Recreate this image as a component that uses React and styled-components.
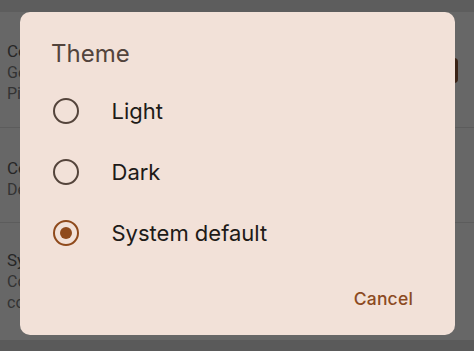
import React from "react";
import styled, { createGlobalStyle } from "styled-components";

const Global = createGlobalStyle`
  html, body { margin: 0; padding: 0; }
  body { font-family: Roboto, "Noto Sans", sans-serif; }
  #root { width: 474px; height: 351px; overflow: hidden; }
`;

const Screen = styled.div`
  position: relative;
  width: 474px;
  height: 351px;
  background: #676767;
  display: flex;
  flex-direction: column;
  overflow: hidden;
`;

const TopBand = styled.div`
  height: 12px;
  background: #5d5d5d;
  flex: none;
`;

const Item = styled.div`
  position: relative;
  height: ${(p) => p.$h}px;
  box-sizing: border-box;
  padding: ${(p) => p.$pt}px 0 0 7px;
  border-bottom: ${(p) => (p.$last ? "none" : "1px solid #5c5c5c")};
  display: flex;
  flex-direction: column;
  gap: 4px;
  flex: none;
`;

const ItemTitle = styled.div`
  font-size: 17px;
  line-height: 20px;
  color: #262626;
  white-space: nowrap;
`;

const ItemSub = styled.div`
  font-size: 16px;
  line-height: 19px;
  color: #333333;
  white-space: nowrap;
  margin-top: -2px;
`;

const BottomBand = styled.div`
  flex: 1;
  background: #5a5a5a;
`;

const SideChip = styled.div`
  position: absolute;
  right: 16px;
  top: 58px;
  width: 22px;
  height: 25px;
  border-radius: 4px;
  background: #3b2316;
`;

const Dialog = styled.div`
  position: absolute;
  left: 20px;
  top: 12px;
  width: 435px;
  height: 323px;
  border-radius: 10px;
  background: #f2e1d8;
  box-sizing: border-box;
  padding: 26px 42px 0 32px;
  display: flex;
  flex-direction: column;
  font-family: Inter, Roboto, sans-serif;
`;

const Title = styled.div`
  font-size: 24px;
  line-height: 32px;
  color: #52443c;
  margin-left: -1px;
  margin-bottom: 10px;
`;

const Options = styled.div`
  display: flex;
  flex-direction: column;
`;

const Option = styled.div`
  height: 61px;
  display: flex;
  align-items: center;
  gap: 34px;
`;

const Radio = styled.div`
  width: 26px;
  height: 26px;
  box-sizing: border-box;
  border-radius: 50%;
  border: 2.6px solid ${(p) => (p.$on ? "#8f4a1c" : "#54443b")};
  display: flex;
  align-items: center;
  justify-content: center;
  margin-left: 0.5px;
  flex: none;
`;

const Dot = styled.div`
  width: 12px;
  height: 12px;
  border-radius: 50%;
  background: #8f4a1c;
`;

const Label = styled.div`
  font-size: 22px;
  line-height: 28px;
  color: #201a17;
  margin-left: -1px;
`;

const Actions = styled.div`
  margin-top: auto;
  margin-bottom: 24px;
  display: flex;
  justify-content: flex-end;
`;

const TextButton = styled.div`
  font-size: 17.5px;
  font-weight: 500;
  line-height: 24px;
  color: #8c4a22;
  letter-spacing: 0.2px;
`;

const options = [
  { label: "Light", on: false },
  { label: "Dark", on: false },
  { label: "System default", on: true },
];

export default function App() {
  return (
    <>
      <Global />
      <Screen>
        <TopBand />
        <Item $h={116} $pt={29}>
          <ItemTitle>Color scheme</ItemTitle>
          <ItemSub>Get colors from wallpaper</ItemSub>
          <ItemSub>Pick a palette</ItemSub>
        </Item>
        <Item $h={95} $pt={30}>
          <ItemTitle>Contrast</ItemTitle>
          <ItemSub>Default</ItemSub>
        </Item>
        <Item $h={117} $pt={27} $last>
          <ItemTitle>Sync settings</ItemTitle>
          <ItemSub>Copy preferences across</ItemSub>
          <ItemSub>connected devices</ItemSub>
        </Item>
        <BottomBand />
        <SideChip />
        <Dialog>
          <Title>Theme</Title>
          <Options>
            {options.map((o) => (
              <Option key={o.label}>
                <Radio $on={o.on}>{o.on && <Dot />}</Radio>
                <Label>{o.label}</Label>
              </Option>
            ))}
          </Options>
          <Actions>
            <TextButton>Cancel</TextButton>
          </Actions>
        </Dialog>
      </Screen>
    </>
  );
}
